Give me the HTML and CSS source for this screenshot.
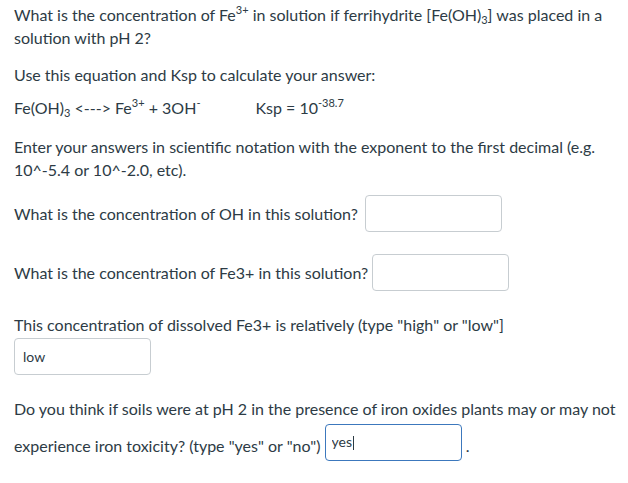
FILE: index.html
```html
<!DOCTYPE html>
<html>
<head>
<meta charset="utf-8">
<link rel="stylesheet" href="styles.css">
</head>
<body>
<div class="q">
  <p class="p1">What is the concentration of Fe<sup>3+</sup> in solution if ferrihydrite [Fe(OH)<sub>3</sub>] was placed in a solution with pH 2?</p>
  <p class="p2">Use this equation and Ksp to calculate your answer:</p>
  <p class="p3">Fe(OH)<sub>3</sub> &lt;---&gt; Fe<sup>3+</sup> + 3OH<sup>-</sup><span class="ksp">Ksp = 10<sup>-38.7</sup></span></p>
  <p class="p4">Enter your answers in scientific notation with the exponent to the first decimal (e.g. 10^-5.4 or 10^-2.0, etc).</p>
  <div class="row r1"><span>What is the concentration of OH in this solution?</span><input class="box" type="text"></div>
  <div class="row r2"><span>What is the concentration of Fe3+ in this solution?</span><input class="box" type="text"></div>
  <p class="p7">This concentration of dissolved Fe3+ is relatively (type "high" or "low"]</p>
  <div class="p8"><input class="box" type="text" value="low"></div>
  <p class="p9">Do you think if soils were at pH 2 in the presence of iron oxides plants may or may not experience iron toxicity? (type "yes" or "no") <span class="wrap"><input class="box focus" type="text" value="yes"><span class="caret"></span></span> .</p>
</div>
</body>
</html>
```
FILE: styles.css
```css
html, body {
  margin: 0;
  padding: 0;
  background: #ffffff;
}
.q {
  padding: 3px 8px 0 14px;
  font-family: Lato, "Open Sans", sans-serif;
  font-size: 16px;
  line-height: 23px;
  color: #2d3b45;
}
.q p {
  margin: 0;
}
sup, sub {
  font-size: 11px;
  line-height: 0;
  position: relative;
  vertical-align: baseline;
}
sup { top: -7px; }
sub { top: 3px; }
.q .p2 { margin-top: 14px; }
.q .p3 { margin-top: 10px; }
.ksp { margin-left: 55px; }
.q .p4 { margin-top: 16px; }
.row {
  display: flex;
  align-items: center;
  gap: 6px;
}
.r1 { margin-top: 14px; gap: 7px; }
.r2 { margin-top: 22px; gap: 4px; }
.q .p7 { margin-top: 22px; }
.p8 { margin-top: 2px; display: flex; }
.q .p9 { margin-top: 22px; }
.box {
  box-sizing: border-box;
  width: 137px;
  height: 37px;
  border: 1px solid #c7cdd1;
  border-radius: 4px;
  padding: 0 8px;
  font-family: Lato, "Open Sans", sans-serif;
  font-size: 14px;
  color: #2d3b45;
  background: #fff;
  outline: none;
  margin: 0;
  display: block;
}
.wrap {
  position: relative;
  display: inline-block;
  overflow: hidden;
  vertical-align: -9px;
  margin-top: 4px;
}
.focus {
  border-color: #3c78bd;
  padding: 0 6px 3px 6px;
}
.caret {
  position: absolute;
  left: 28px;
  top: 12px;
  width: 1px;
  height: 14px;
  background: #2d3b45;
}
```
